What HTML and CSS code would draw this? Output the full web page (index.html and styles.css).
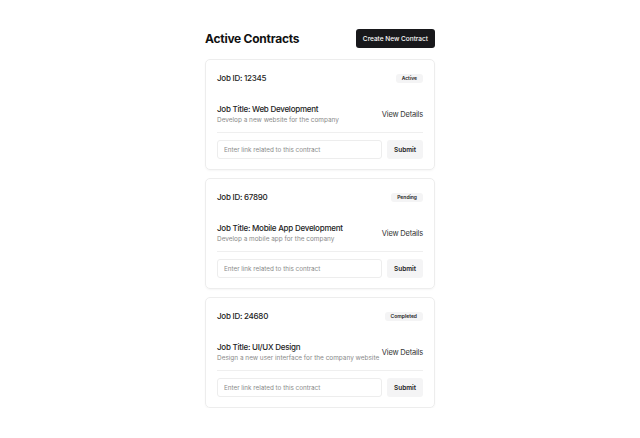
FILE: index.html
```html
<!DOCTYPE html>
<html lang="en">
<head>
<meta charset="utf-8">
<title>Active Contracts</title>
<link rel="stylesheet" href="styles.css">
</head>
<body>
<main class="page">
  <header class="head">
    <h1 class="title">Active Contracts</h1>
    <button class="btn-create">Create New Contract</button>
  </header>
  <section class="list">
    <article class="card">
      <div class="card-top">
        <span class="job-id">Job ID: 12345</span>
        <span class="badge">Active</span>
      </div>
      <div class="card-mid">
        <div class="info">
          <div class="job-title">Job Title: Web Development</div>
          <div class="job-desc">Develop a new website for the company</div>
        </div>
        <a class="details">View Details</a>
      </div>
      <form class="card-foot">
        <input class="link-input" type="text" placeholder="Enter link related to this contract">
        <button class="btn-submit" type="button">Submit</button>
      </form>
    </article>
    <article class="card">
      <div class="card-top">
        <span class="job-id">Job ID: 67890</span>
        <span class="badge">Pending</span>
      </div>
      <div class="card-mid">
        <div class="info">
          <div class="job-title">Job Title: Mobile App Development</div>
          <div class="job-desc">Develop a mobile app for the company</div>
        </div>
        <a class="details">View Details</a>
      </div>
      <form class="card-foot">
        <input class="link-input" type="text" placeholder="Enter link related to this contract">
        <button class="btn-submit" type="button">Submit</button>
      </form>
    </article>
    <article class="card">
      <div class="card-top">
        <span class="job-id">Job ID: 24680</span>
        <span class="badge">Completed</span>
      </div>
      <div class="card-mid">
        <div class="info">
          <div class="job-title">Job Title: UI/UX Design</div>
          <div class="job-desc">Design a new user interface for the company website</div>
        </div>
        <a class="details">View Details</a>
      </div>
      <form class="card-foot">
        <input class="link-input" type="text" placeholder="Enter link related to this contract">
        <button class="btn-submit" type="button">Submit</button>
      </form>
    </article>
  </section>
</main>
</body>
</html>
```

FILE: styles.css
```css
* { box-sizing: border-box; }
html, body { margin: 0; padding: 0; background: #fff; }
body {
  font-family: Inter, "Liberation Sans", sans-serif;
  color: #1f2328;
  -webkit-font-smoothing: antialiased;
}
.page {
  width: 230px;
  margin: 0 auto;
  padding-top: 29px;
}
.head {
  display: flex;
  justify-content: space-between;
  align-items: center;
  height: 19px;
  margin-bottom: 11px;
}
.title {
  margin: 0;
  font-size: 12px;
  font-weight: 700;
  color: #111;
  letter-spacing: -0.25px;
}
.btn-create {
  height: 19px;
  padding: 0 7px;
  border: none;
  border-radius: 3px;
  background: #18181b;
  color: #fff;
  font-family: inherit;
  font-size: 6.5px;
  font-weight: 500;
}
.list {
  display: flex;
  flex-direction: column;
  gap: 8px;
}
.card {
  border: 1px solid #ededed;
  border-radius: 5px;
  box-shadow: 0 1px 2px rgba(0,0,0,0.04);
  padding: 11px 11px 10px;
}
.card-top {
  display: flex;
  justify-content: space-between;
  align-items: center;
  height: 14px;
}
.job-id {
  font-size: 8px;
  font-weight: 500;
  letter-spacing: -0.25px;
  color: #222;
}
.badge {
  background: #f4f4f5;
  border-radius: 3px;
  padding: 1px 6px;
  font-size: 5px;
  font-weight: 600;
  line-height: 7px;
  color: #222;
}
.card-mid {
  display: flex;
  justify-content: space-between;
  align-items: center;
  margin-top: 19px;
  padding-bottom: 7px;
  border-bottom: 1px solid #efefef;
}
.job-title {
  font-size: 8px;
  font-weight: 500;
  letter-spacing: -0.25px;
  line-height: 11px;
  color: #222;
}
.job-desc {
  font-size: 6.45px;
  line-height: 10px;
  color: #8a8a8a;
}
.details {
  font-size: 7.5px;
  letter-spacing: -0.2px;
  color: #333;
  white-space: nowrap;
}
.card-foot {
  display: flex;
  gap: 5px;
  margin: 7px 0 0;
}
.link-input {
  flex: 1;
  height: 19px;
  border: 1px solid #ededed;
  border-radius: 3px;
  padding: 0 6px;
  font-family: inherit;
  font-size: 6.3px;
  color: #333;
  background: #fff;
}
.link-input::placeholder { color: #8a8a8a; }
.btn-submit {
  width: 36px;
  height: 19px;
  border: none;
  border-radius: 3px;
  background: #f4f4f5;
  font-family: inherit;
  font-size: 6.5px;
  font-weight: 600;
  color: #222;
  padding: 0;
}
```
